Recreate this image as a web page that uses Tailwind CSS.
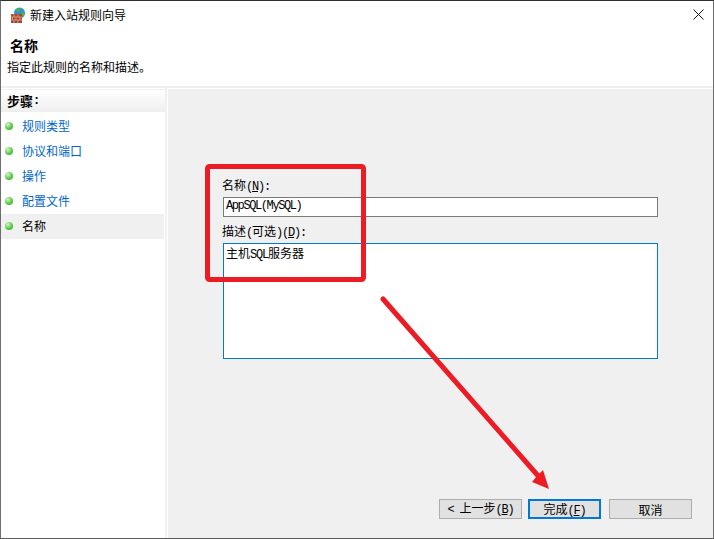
<!DOCTYPE html>
<html lang="zh-CN">
<head>
<meta charset="UTF-8">
<title>新建入站规则向导</title>
<script src="https://cdn.jsdelivr.net/npm/@tailwindcss/browser@4"></script>
</head>
<body class="bg-white">
<div class="relative w-[714px] h-[539px] overflow-hidden font-['Noto_Sans_CJK_SC','Liberation_Sans',sans-serif] text-[12px] leading-[14px] text-black">
  <div class="w-full h-[539px] flex flex-col border-t border-t-[#2f2f2f] border-l border-l-[#6e6e6e] border-r border-r-[#6e6e6e] border-b border-b-[#5a5a5a]">

    <!-- title bar -->
    <div class="h-[29px] pb-[2px] flex items-center shrink-0">
      <svg class="ml-[9px] w-[16px] h-[16px]" viewBox="0 0 16 16">
        <circle cx="9.500" cy="6" r="5.500" fill="#2f8fd8"/>
        <path d="M6 2.500c2-1.500 4-1.500 5-.5l-1 2-3 1zM11 6l3-1 .8 2-2 3-2-1z" fill="#58b13c"/>
        <rect x="1" y="7" width="11" height="9" fill="#a8472f"/>
        <path d="M1 10h11M1 13h11M4 7v3M8 7v3M2.500 10v3M6 10v3M10 10v3M4 13v3M8 13v3" stroke="#dca48e" stroke-width=".8" fill="none"/>
      </svg>
      <span class="ml-[4px]">新建入站规则向导</span>
      <svg class="ml-auto mr-[9px] w-[11px] h-[11px]" viewBox="0 0 11 11">
        <path d="M.5.500l10 10M10.500.500l-10 10" stroke="#111" stroke-width="1" fill="none"/>
      </svg>
    </div>

    <!-- header -->
    <div class="h-[58px] shrink-0 border-b-2 border-b-[#f0f0f0]">
      <h1 class="pl-[9px] pt-[7px] text-[14px] leading-[16px] font-bold">名称</h1>
      <p class="pl-[6px] pt-[7px]">指定此规则的名称和描述。</p>
    </div>

    <div class="flex-1 flex min-h-0">
      <!-- steps -->
      <aside class="w-[166px] shrink-0 pt-[1px] border-r-2 border-r-[#f0f0f0]">
        <div class="h-[23px] pl-[6px] flex items-center text-[13px] font-bold bg-gradient-to-b from-white to-[#eeeeee] border-t border-t-[#f0f0f0]">步骤<span class="font-['Liberation_Mono',monospace] text-[12px]">:</span></div>
        <ul class="pt-[2px] mr-[1px]">
          <li class="h-[25px] pb-[1px] flex items-center text-[#0066cc]"><span class="w-[8px] h-[8px] ml-[4px] mr-[9px] rounded-full bg-[radial-gradient(circle_at_35%_30%,#d8f0d0,#4fc83a_60%,#3aa52a)]"></span>规则类型</li>
          <li class="h-[25px] pb-[1px] flex items-center text-[#0066cc]"><span class="w-[8px] h-[8px] ml-[4px] mr-[9px] rounded-full bg-[radial-gradient(circle_at_35%_30%,#d8f0d0,#4fc83a_60%,#3aa52a)]"></span>协议和端口</li>
          <li class="h-[25px] pb-[1px] flex items-center text-[#0066cc]"><span class="w-[8px] h-[8px] ml-[4px] mr-[9px] rounded-full bg-[radial-gradient(circle_at_35%_30%,#d8f0d0,#4fc83a_60%,#3aa52a)]"></span>操作</li>
          <li class="h-[25px] pb-[1px] flex items-center text-[#0066cc]"><span class="w-[8px] h-[8px] ml-[4px] mr-[9px] rounded-full bg-[radial-gradient(circle_at_35%_30%,#d8f0d0,#4fc83a_60%,#3aa52a)]"></span>配置文件</li>
          <li class="h-[25px] pb-[1px] flex items-center bg-[#f0f0f0]"><span class="w-[8px] h-[8px] ml-[4px] mr-[9px] rounded-full bg-[radial-gradient(circle_at_35%_30%,#d8f0d0,#4fc83a_60%,#3aa52a)]"></span>名称</li>
        </ul>
      </aside>

      <!-- form -->
      <main class="flex-1 ml-[1px] mt-[1px] bg-[#f0f0f0] flex flex-col pl-[55px] pr-[21px] pt-[90px]">
        <label class="h-[18px] ml-[-1px] leading-[12px]">名称<span class="font-['Liberation_Mono',monospace] tracking-[-1.2px]">(<span class="underline">N</span>):</span></label>
        <div class="h-[20px] w-[435px] border border-[#7a7a7a] bg-white px-[2px] font-['Liberation_Mono',monospace] tracking-[-1.4px] leading-[17px]">AppSQL(MySQL)</div>
        <label class="mt-[8px] h-[18px] ml-[-1px] leading-[12px]">描述<span class="font-['Liberation_Mono',monospace] tracking-[-1.2px]">(</span>可选<span class="font-['Liberation_Mono',monospace] tracking-[-1.2px]">)(<span class="underline">D</span>):</span></label>
        <div class="h-[116px] w-[435px] border border-[#0078d7] bg-white px-[2px] pt-[2px]">主机<span class="font-['Liberation_Mono',monospace] tracking-[-1.2px]">SQL</span>服务器</div>
        <div class="mt-auto mb-[19px] flex justify-end">
          <button class="w-[83px] h-[20px] border border-[#adadad] bg-[#e1e1e1] leading-[15px]"><span class="font-['Liberation_Mono',monospace] tracking-[-1.2px]">&lt; </span>上一步<span class="font-['Liberation_Mono',monospace] tracking-[-1.2px]">(<span class="underline">B</span>)</span></button>
          <button class="w-[73px] h-[20px] ml-[6px] border-2 border-[#0078d7] bg-[#e1e1e1] leading-[15px]">完成<span class="font-['Liberation_Mono',monospace] tracking-[-1.2px]">(<span class="underline">F</span>)</span></button>
          <button class="w-[83px] h-[20px] ml-[8px] border border-[#adadad] bg-[#e1e1e1] leading-[15px]">取消</button>
        </div>
      </main>
    </div>
  </div>

  <!-- red annotations -->
  <svg class="absolute inset-0 w-[714px] h-[539px] pointer-events-none" viewBox="0 0 714 539">
    <rect x="207.500" y="166.500" width="156" height="113" rx="2" fill="none" stroke="#ed1c24" stroke-width="5"/>
    <path d="M383 299L540 478" stroke="#ed1c24" stroke-width="5" stroke-linecap="round" fill="none"/>
    <path d="M549 489L532 482L537 476L543 470Z" fill="#ed1c24"/>
  </svg>
</div>
</body>
</html>
